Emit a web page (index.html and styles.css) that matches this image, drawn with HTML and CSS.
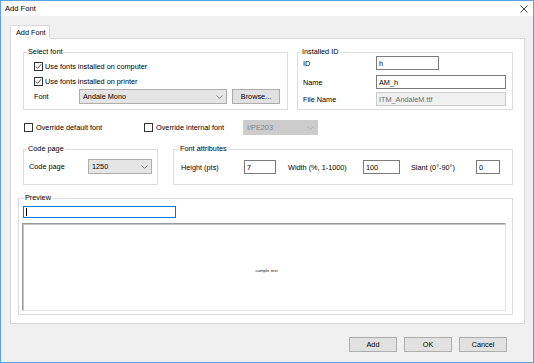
FILE: index.html
```html
<!DOCTYPE html>
<html>
<head>
<meta charset="utf-8">
<link rel="stylesheet" href="styles.css">
</head>
<body>
<div class="window">
  <div class="titlebar">
    <span class="title">Add Font</span>
    <svg class="close" width="8" height="8" viewBox="0 0 8 8"><path d="M0.5 0.5 L7.5 7.5 M7.5 0.5 L0.5 7.5" stroke="#333" stroke-width="0.9" fill="none"/></svg>
  </div>
  <div class="content">
    <div class="tabs"><div class="tab">Add Font</div></div>
    <div class="panel">
      <div class="row row-top">
        <fieldset class="group g-select">
          <legend>Select font</legend>
          <div class="check-row">
            <span class="cb"><svg width="7" height="7" viewBox="0 0 7 7"><polyline points="0.8,3.6 2.6,5.4 6.2,1.2" fill="none" stroke="#333" stroke-width="0.9"/></svg></span>
            <span>Use fonts installed on computer</span>
          </div>
          <div class="check-row">
            <span class="cb"><svg width="7" height="7" viewBox="0 0 7 7"><polyline points="0.8,3.6 2.6,5.4 6.2,1.2" fill="none" stroke="#333" stroke-width="0.9"/></svg></span>
            <span>Use fonts installed on printer</span>
          </div>
          <div class="font-row">
            <span class="font-label">Font</span>
            <div class="combo combo-font"><span>Andale Mono</span><svg width="7" height="4" viewBox="0 0 7 4"><polyline points="0.5,0.5 3.5,3.3 6.5,0.5" fill="none" stroke="#6a6a6a" stroke-width="0.8"/></svg></div>
            <div class="btn btn-browse">Browse...</div>
          </div>
        </fieldset>
        <fieldset class="group g-id">
          <legend>Installed ID</legend>
          <div class="id-row r1"><span class="id-label">ID</span><div class="field f-id">h</div></div>
          <div class="id-row r2"><span class="id-label">Name</span><div class="field f-name">AM_h</div></div>
          <div class="id-row"><span class="id-label">File Name</span><div class="field f-name disabled">ITM_AndaleM.ttf</div></div>
        </fieldset>
      </div>
      <div class="row row-override">
        <div class="ov ov1"><span class="cb"></span><span>Override default font</span></div>
        <div class="ov ov2"><span class="cb"></span><span>Override internal font</span></div>
        <div class="combo combo-dis"><span>I/PE203</span><svg width="7" height="4" viewBox="0 0 7 4"><polyline points="0.5,0.5 3.5,3.3 6.5,0.5" fill="none" stroke="#a8a8a8" stroke-width="0.8"/></svg></div>
      </div>
      <div class="row row-mid">
        <fieldset class="group g-code">
          <legend>Code page</legend>
          <div class="code-row">
            <span class="code-label">Code page</span>
            <div class="combo combo-code"><span>1250</span><svg width="7" height="4" viewBox="0 0 7 4"><polyline points="0.5,0.5 3.5,3.3 6.5,0.5" fill="none" stroke="#6a6a6a" stroke-width="0.8"/></svg></div>
          </div>
        </fieldset>
        <fieldset class="group g-attr">
          <legend>Font attributes</legend>
          <div class="attr-row">
            <span class="a-l1">Height (pts)</span><div class="field f-h">7</div>
            <span class="a-l2">Width (%, 1-1000)</span><div class="field f-w">100</div>
            <span class="a-l3">Slant (0°-90°)</span><div class="field f-s">0</div>
          </div>
        </fieldset>
      </div>
      <fieldset class="group g-preview">
        <legend>Preview</legend>
        <div class="field f-preview"><span class="caret"></span></div>
        <div class="preview-box"><span class="sample">sample text</span></div>
      </fieldset>
    </div>
    <div class="buttons">
      <div class="btn btn-dlg">Add</div>
      <div class="btn btn-dlg">OK</div>
      <div class="btn btn-dlg">Cancel</div>
    </div>
  </div>
</div>
</body>
</html>
```
FILE: styles.css
```css
html, body {
  margin: 0;
  padding: 0;
}
body {
  font-family: "Liberation Sans", Arial, sans-serif;
  font-size: 7.3px;
  color: #000;
  background: #fff;
}
.window {
  width: 534px;
  height: 363px;
  box-sizing: border-box;
  border: 1px solid #5ba3e0;
  background: #f0f0f0;
  display: flex;
  flex-direction: column;
}
.titlebar {
  flex: none;
  height: 15px;
  background: #fff;
  display: flex;
  align-items: center;
  justify-content: space-between;
  padding: 0 5px 0 4px;
}
.title {
  font-size: 7.6px;
}
.close {
  display: block;
}
.content {
  flex: 1;
  display: flex;
  flex-direction: column;
  padding: 9px 8px 0 9px;
}
.tabs {
  display: flex;
}
.tab {
  position: relative;
  z-index: 1;
  height: 14px;
  box-sizing: border-box;
  width: 40px;
  padding: 2px 0 0 5px;
  line-height: 9px;
  background: #fff;
  border: 1px solid #d9d9d9;
  border-bottom: 1px solid #fff;
  margin-bottom: -1px;
}
.panel {
  background: #fff;
  border: 1px solid #d9d9d9;
  padding: 9px 11px 8px 7px;
}
.row {
  display: flex;
}
.group {
  margin: 0;
  padding: 0;
  min-width: 0;
  box-sizing: border-box;
  border: 1px solid #dcdcdc;
}
.group legend {
  padding: 0 1px;
  margin-left: -2px;
  line-height: 8px;
  font-size: 7.3px;
}
.row-top {
  margin-left: 5px;
  gap: 9px;
}
.g-select {
  width: 265px;
  padding: 3px 0 5px 10px;
}
.g-select legend {
  margin-left: -7px;
}
.g-id {
  width: 216px;
  padding: 0 0 3px 5px;
}
.check-row {
  display: flex;
  align-items: center;
  height: 15px;
}
.cb {
  width: 9px;
  height: 9px;
  box-sizing: border-box;
  border: 1px solid #333;
  background: #fff;
  display: flex;
  align-items: center;
  justify-content: center;
  margin-right: 2px;
  flex: none;
}
.cb svg {
  display: block;
}
.font-row {
  display: flex;
  align-items: center;
  height: 15px;
}
.font-label {
  width: 45px;
}
.combo {
  height: 15px;
  box-sizing: border-box;
  display: flex;
  align-items: center;
  justify-content: space-between;
  background: #e5e5e5;
  border: 1px solid #adadad;
  padding: 0 3px 0 3px;
}
.combo svg {
  display: block;
}
.combo-font {
  width: 148px;
}
.btn {
  height: 15px;
  box-sizing: border-box;
  background: #e1e1e1;
  border: 1px solid #adadad;
  display: flex;
  align-items: center;
  justify-content: center;
}
.btn-browse {
  width: 48px;
  margin-left: 5px;
}
.id-row {
  display: flex;
  align-items: center;
  height: 14px;
}
.id-row.r1 {
  margin-bottom: 5px;
}
.id-row.r2 {
  margin-bottom: 3px;
}
.id-label {
  width: 73px;
}
.field {
  height: 14px;
  box-sizing: border-box;
  border: 1px solid #7a7a7a;
  background: #fff;
  display: flex;
  align-items: center;
  padding-left: 2px;
}
.f-id {
  width: 63px;
}
.f-name {
  width: 130px;
}
.field.disabled {
  background: #f0f0f0;
  border-color: #cccccc;
  color: #6d6d6d;
}
.row-override {
  margin-top: 10px;
  margin-left: 6px;
  height: 15px;
  align-items: center;
}
.ov {
  display: flex;
  align-items: center;
}
.ov .cb {
  margin-right: 3px;
}
.ov1 {
  width: 120px;
}
.ov2 {
  width: 99px;
}
.combo-dis {
  width: 75px;
  background: #cccccc;
  border-color: #cccccc;
  color: #838383;
}
.row-mid {
  margin-top: 10px;
  margin-left: 5px;
  gap: 15px;
}
.g-code {
  width: 135px;
  padding: 6px 0 10px 5px;
}
.code-row {
  display: flex;
  align-items: center;
  height: 15px;
}
.code-label {
  width: 59px;
}
.combo-code {
  width: 64px;
}
.g-attr {
  width: 340px;
  padding: 7px 0 0 7px;
}
.attr-row {
  display: flex;
  align-items: center;
  height: 14px;
}
.a-l1 {
  width: 63px;
}
.f-h {
  width: 32px;
}
.a-l2 {
  width: 75px;
  margin-left: 12px;
}
.f-w {
  width: 37px;
}
.a-l3 {
  width: 65px;
  margin-left: 11px;
}
.f-s {
  width: 24px;
}
.g-preview {
  margin-top: 9px;
  width: 495px;
  padding: 4px 0 3px 4px;
}
.g-preview legend {
  margin-left: 1px;
}
.f-preview {
  width: 153px;
  height: 12px;
  border-color: #0078d7;
  padding-left: 2px;
}
.caret {
  width: 1px;
  height: 8px;
  background: #000;
}
.preview-box {
  margin-top: 5px;
  margin-left: -1px;
  width: 484px;
  height: 88px;
  box-sizing: border-box;
  border: 1px solid;
  border-color: #9a9a9a #e3e3e3 #e3e3e3 #9a9a9a;
  box-shadow: inset 1px 1px 0 #c4c4c4;
  display: flex;
  align-items: center;
  justify-content: center;
  padding: 6px 0 0 5px;
}
.sample {
  font-size: 4.4px;
  color: #222;
}
.buttons {
  display: flex;
  justify-content: flex-end;
  gap: 7px;
  margin-top: 13px;
  margin-right: 18px;
}
.btn-dlg {
  width: 48px;
}
```
